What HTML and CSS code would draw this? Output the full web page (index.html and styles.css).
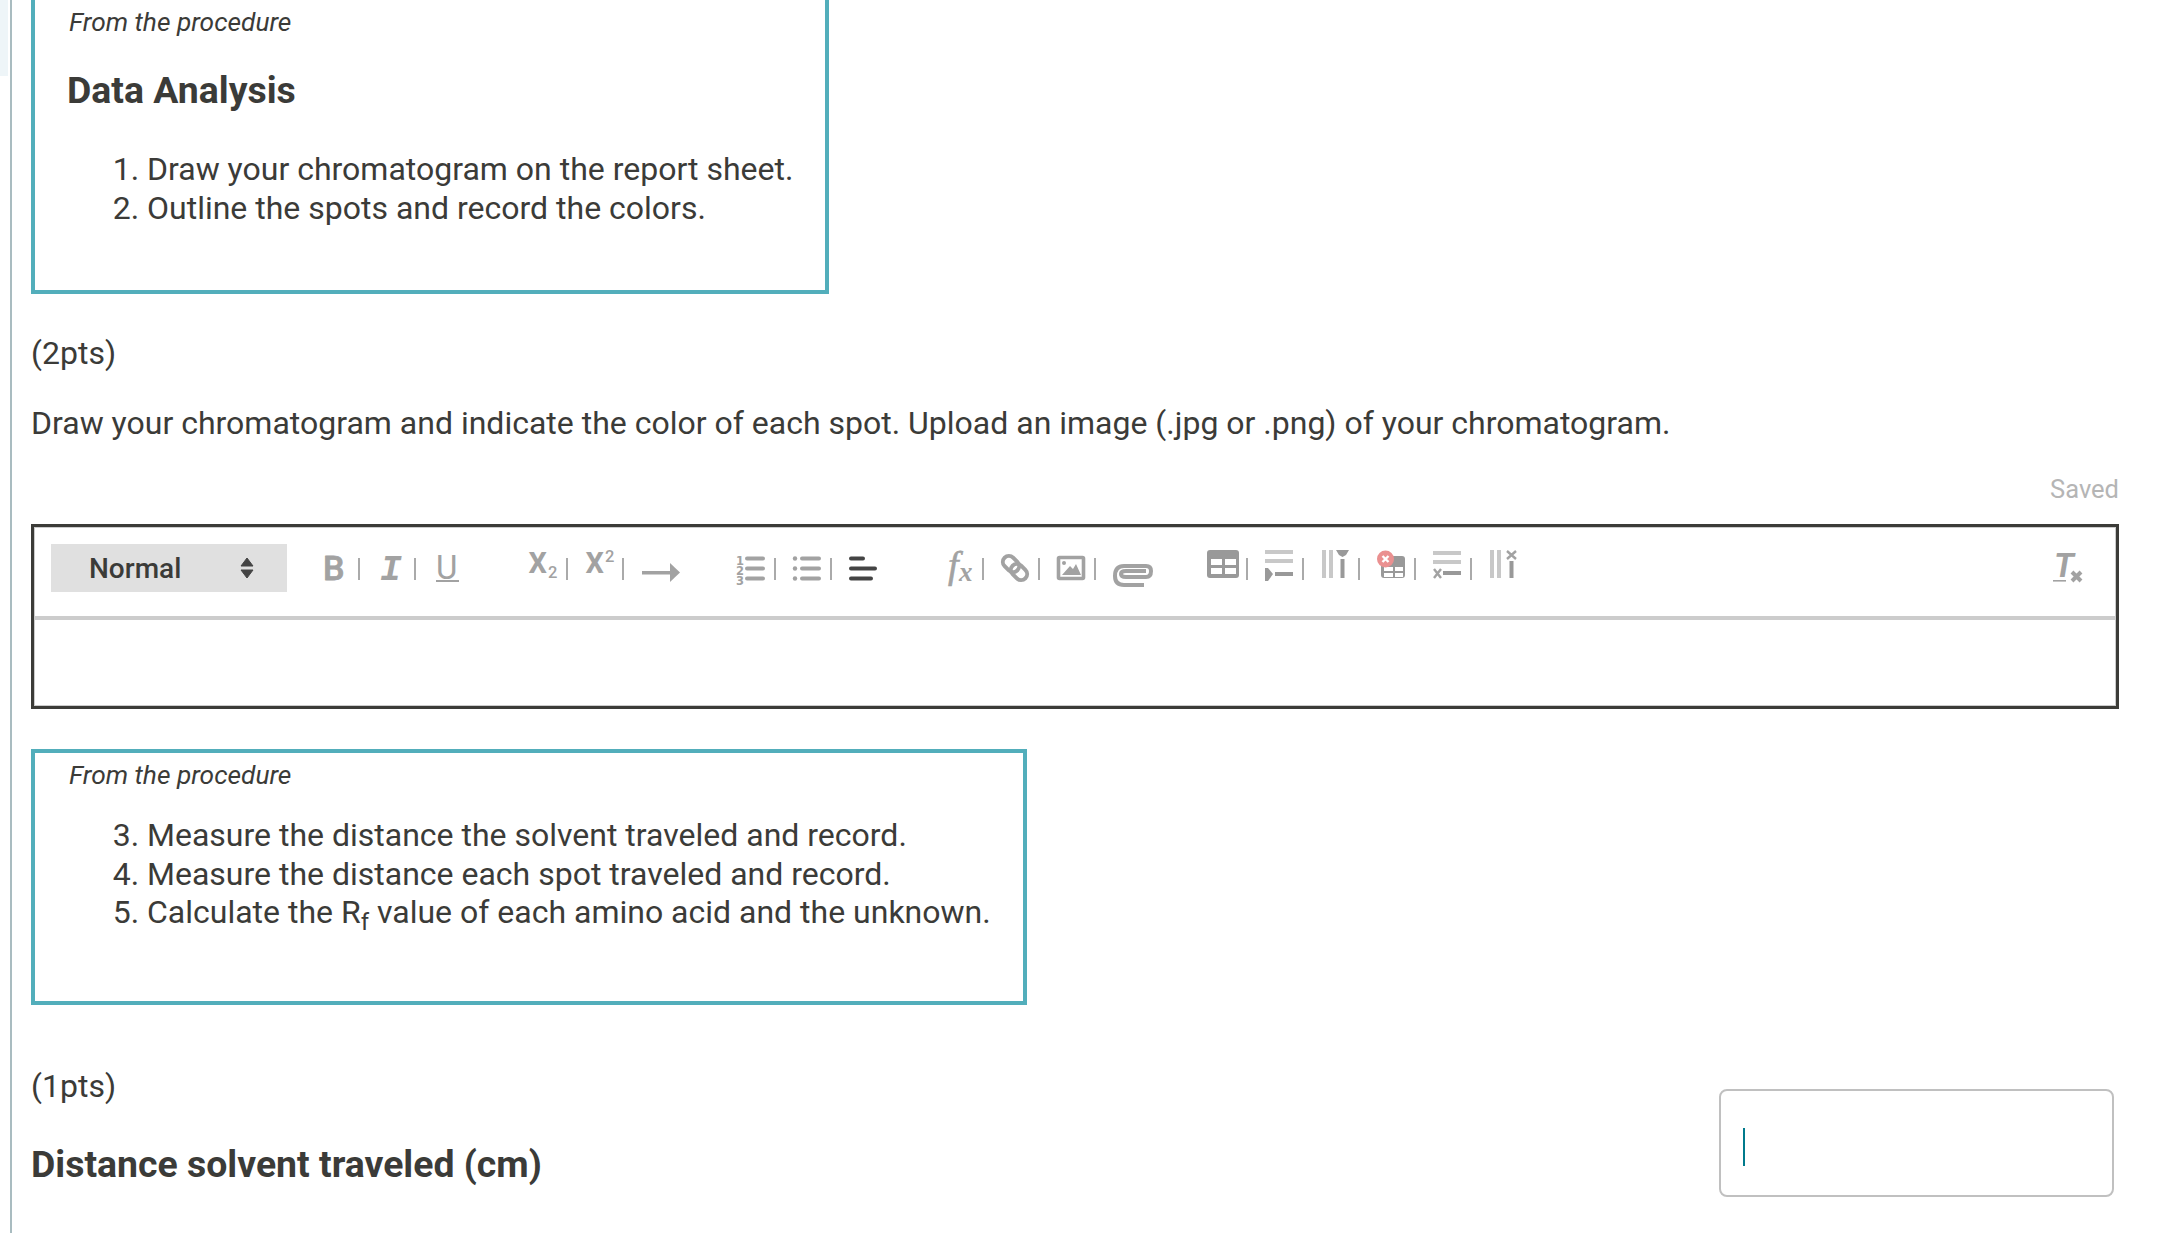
FILE: index.html
```html
<!DOCTYPE html>
<html lang="en">
<head>
<meta charset="UTF-8">
<title>Data Analysis</title>
<link rel="stylesheet" href="styles.css">
</head>
<body>
<div class="gutter"><div class="gutter-tab"></div></div>
<div class="page">

  <div class="procedure procedure-first">
    <p class="procedure-note">From the procedure</p>
    <h3>Data Analysis</h3>
    <ol>
      <li>Draw your chromatogram on the report sheet.</li>
      <li>Outline the spots and record the colors.</li>
    </ol>
  </div>

  <p class="points">(2pts)</p>
  <p class="question">Draw your chromatogram and indicate the color of each spot. Upload an image (.jpg or .png) of your chromatogram.</p>
  <div class="saved">Saved</div>

  <div class="editor">
    <div class="toolbar">
      <div class="format-select"><span>Normal</span>
        <svg width="14" height="22" viewBox="0 0 14 22"><path d="M7 1 L13 9 H1 Z M7 21 L13 13 H1 Z" fill="#444" stroke="#444" stroke-linejoin="round"/></svg>
      </div>

      <div class="tool-group first-group">
        <div class="tool"><svg viewBox="0 0 54 48"><text x="19" y="36" class="ico-b">B</text></svg></div>
        <div class="tool"><svg viewBox="0 0 54 48"><text x="20" y="36" class="ico-i">I</text></svg></div>
        <div class="tool last"><svg viewBox="0 0 54 48"><text x="20" y="35" class="ico-u">U</text><rect x="20" y="36" width="23" height="2" class="fill-gray"/></svg></div>
      </div>

      <div class="tool-group">
        <div class="tool"><svg viewBox="0 0 54 48"><text x="16.500" y="29" class="ico-x">X</text><text x="36" y="34" class="ico-idx">2</text></svg></div>
        <div class="tool"><svg viewBox="0 0 54 48"><text x="17.500" y="29" class="ico-x">X</text><text x="37" y="18" class="ico-idx">2</text></svg></div>
        <div class="tool last"><svg viewBox="0 0 54 48"><rect x="18" y="27" width="30" height="3.500" class="fill-gray"/><path d="M46 19 L56 28.500 L46 38 Z" class="fill-gray"/></svg></div>
      </div>

      <div class="tool-group">
        <div class="tool"><svg viewBox="0 0 54 48">
          <text x="16" y="21" class="ico-num">1</text><text x="16" y="31" class="ico-num">2</text><text x="16" y="41" class="ico-num">3</text>
          <rect x="25" y="12.500" width="20" height="4" rx="2" class="fill-gray"/><rect x="25" y="22.500" width="20" height="4" rx="2" class="fill-gray"/><rect x="25" y="32.500" width="20" height="4" rx="2" class="fill-gray"/>
        </svg></div>
        <div class="tool"><svg viewBox="0 0 54 48">
          <circle cx="19" cy="14.500" r="2.200" class="fill-gray"/><circle cx="19" cy="24.500" r="2.200" class="fill-gray"/><circle cx="19" cy="34.500" r="2.200" class="fill-gray"/>
          <rect x="24" y="12.500" width="21" height="4" rx="2" class="fill-gray"/><rect x="24" y="22.500" width="21" height="4" rx="2" class="fill-gray"/><rect x="24" y="32.500" width="21" height="4" rx="2" class="fill-gray"/>
        </svg></div>
        <div class="tool last"><svg viewBox="0 0 54 48">
          <rect x="17" y="12.500" width="16" height="4" rx="2" class="fill-dark"/><rect x="17" y="22.500" width="28" height="4" rx="2" class="fill-dark"/><rect x="17" y="32.500" width="24" height="4" rx="2" class="fill-dark"/>
        </svg></div>
      </div>

      <div class="tool-group">
        <div class="tool"><svg viewBox="0 0 54 48"><text x="20" y="34" class="ico-fx">f</text><text x="31" y="37" class="ico-fx2">x</text></svg></div>
        <div class="tool"><svg viewBox="0 0 54 48">
          <g fill="none" stroke="#a2a2a2" stroke-width="4">
            <rect x="18" y="14" width="18" height="12" rx="6" transform="rotate(45 27 20)"/>
            <rect x="26" y="22" width="18" height="12" rx="6" transform="rotate(45 35 28)"/>
          </g>
        </svg></div>
        <div class="tool"><svg viewBox="0 0 54 48">
          <rect x="18.500" y="13.500" width="25" height="21" rx="1" fill="none" stroke="#a2a2a2" stroke-width="3.600"/>
          <path d="M22 31 L30 22 L33 25 L36 20 L41 31 Z" class="fill-gray"/><circle cx="24" cy="19" r="2" class="fill-gray"/>
        </svg></div>
        <div class="tool last"><svg viewBox="0 0 54 48">
          <path d="M50 27 H30 Q25 27 25 30 Q25 33 30 33 H50 Q55 33 55 27 Q55 22 50 22 H28 Q19 22 19 32 Q19 41 28 41 H48" fill="none" stroke="#a2a2a2" stroke-width="4"/>
        </svg></div>
      </div>

      <div class="tool-group">
        <div class="tool"><svg viewBox="0 0 54 48">
          <rect x="15" y="6" width="32" height="28" rx="3" class="fill-table"/>
          <rect x="19" y="15" width="11" height="6" fill="#fff"/><rect x="33" y="15" width="11" height="6" fill="#fff"/><rect x="19" y="24" width="11" height="6" fill="#fff"/><rect x="33" y="24" width="11" height="6" fill="#fff"/>
        </svg></div>
        <div class="tool"><svg viewBox="0 0 54 48">
          <rect x="17" y="6" width="28" height="4" class="fill-light"/><rect x="17" y="15" width="28" height="4" class="fill-light"/>
          <path d="M17 24 H20 L25 30 L20 37 H17 Z" class="fill-table"/><rect x="27" y="28" width="18" height="4" class="fill-table"/>
        </svg></div>
        <div class="tool"><svg viewBox="0 0 54 48">
          <rect x="18" y="6" width="4" height="28" class="fill-light"/><rect x="25" y="6" width="4" height="28" class="fill-light"/>
          <path d="M32 6 H45 L42 11 L38.500 13 L35 11 Z" class="fill-table"/><rect x="36.500" y="15" width="4" height="19" class="fill-table"/>
        </svg></div>
        <div class="tool"><svg viewBox="0 0 54 48">
          <rect x="21" y="12" width="24" height="22" rx="3" class="fill-table"/>
          <rect x="24" y="23" width="9" height="4" fill="#fff"/><rect x="35" y="23" width="8" height="4" fill="#fff"/><rect x="24" y="29" width="9" height="4" fill="#fff"/><rect x="35" y="29" width="8" height="4" fill="#fff"/>
          <circle cx="25.500" cy="15" r="8.500" fill="#ea9090"/>
          <path d="M22.500 12 L28.500 18 M28.500 12 L22.500 18" stroke="#fff" stroke-width="2.400"/>
        </svg></div>
        <div class="tool"><svg viewBox="0 0 54 48">
          <rect x="17" y="7" width="28" height="4" class="fill-light"/><rect x="17" y="16" width="28" height="4" class="fill-light"/>
          <path d="M18 25 L25 34 M25 25 L18 34" stroke="#a2a2a2" stroke-width="2.400"/><rect x="27" y="27" width="18" height="4" class="fill-table"/>
        </svg></div>
        <div class="tool last"><svg viewBox="0 0 54 48">
          <rect x="18" y="6" width="4" height="28" class="fill-light"/><rect x="25" y="6" width="4" height="28" class="fill-light"/>
          <path d="M35 7 L44 15 M44 7 L35 15" stroke="#a2a2a2" stroke-width="2.400"/><rect x="37.500" y="17" width="4" height="17" class="fill-table"/>
        </svg></div>
      </div>

      <div class="clear-format"><svg width="32" height="48" viewBox="0 0 32 48"><text x="2" y="33" class="ico-t">T</text><path d="M20 28 L29 37 M29 28 L20 37" stroke="#a2a2a2" stroke-width="4"/><rect x="1" y="36" width="13" height="1.600" class="fill-gray"/></svg></div>
    </div>
    <div class="editor-body"></div>
  </div>

  <div class="procedure procedure-second">
    <p class="procedure-note">From the procedure</p>
    <ol start="3">
      <li>Measure the distance the solvent traveled and record.</li>
      <li>Measure the distance each spot traveled and record.</li>
      <li>Calculate the R<sub>f</sub> value of each amino acid and the unknown.</li>
    </ol>
  </div>

  <div class="answer-row">
    <div class="answer-label">
      <p class="points">(1pts)</p>
      <h3>Distance solvent traveled (cm)</h3>
    </div>
    <div class="answer-input"><span class="caret"></span></div>
  </div>

</div>
</body>
</html>
```

FILE: styles.css
```css
html, body {
  margin: 0;
  padding: 0;
  height: 100%;
  overflow: hidden;
}
body {
  display: flex;
  background-color: #fff;
  color: #3b3b38;
  font-family: Roboto, sans-serif;
  font-size: 32px;
}
.gutter {
  width: 10px;
  flex: none;
}
.gutter-tab {
  width: 8px;
  height: 76px;
  background-color: #eef5f8;
}
.page {
  flex: 1;
  border-left: 2px solid #a9bcc0;
  padding: 0 39px 0 19px;
}
p, h3 {
  margin: 0;
}

/* procedure boxes */
.procedure {
  border: 4px solid #52aebb;
  padding-left: 34px;
}
.procedure-first {
  width: 798px;
  height: 294px;
  box-sizing: border-box;
  border-top: 0;
}
.procedure-second {
  width: 996px;
  height: 256px;
  box-sizing: border-box;
  margin-top: 40px;
}
.procedure-note {
  font-style: italic;
  font-size: 26.300px;
  line-height: 32px;
}
.procedure-first .procedure-note {
  padding-top: 6px;
}
.procedure-second .procedure-note {
  padding-top: 6px;
}
h3 {
  font-size: 37.400px;
  font-weight: 700;
  line-height: 44px;
}
.procedure-first h3 {
  margin-top: 30px;
  margin-left: -2px;
}
.procedure ol {
  margin: 0;
  padding-left: 78px;
  line-height: 38.500px;
}
.procedure-first ol {
  margin-top: 38px;
}
.procedure-second ol {
  margin-top: 25px;
}
sub {
  font-size: 24px;
  line-height: 0;
}

/* question text */
.points {
  line-height: 40px;
}
.procedure-first + .points {
  margin-top: 39px;
}
.question {
  margin-top: 30px;
  line-height: 40px;
}
.saved {
  margin-top: 31px;
  text-align: right;
  color: #b5b5b5;
  font-size: 25.500px;
  line-height: 30px;
}

/* editor */
.editor {
  margin-top: 20px;
  border: 3px solid #3c3c38;
  box-shadow: inset 0 0 0 1px #ccc;
}
.toolbar {
  display: flex;
  align-items: flex-start;
  padding: 17px 32px 24px 17px;
  border-bottom: 4px solid #ccc;
}
.editor-body {
  height: 86px;
}
.format-select {
  width: 236px;
  height: 48px;
  flex: none;
  display: flex;
  align-items: center;
  justify-content: space-between;
  box-sizing: border-box;
  padding: 0 33px 0 38px;
  background-color: #e0e0e0;
  font-size: 28px;
  font-weight: 500;
}
.tool-group {
  display: flex;
  margin-left: 40px;
}
.first-group {
  margin-left: 17px;
}
.tool {
  width: 56px;
  height: 48px;
  display: flex;
}
.tool svg {
  width: 54px;
  height: 48px;
  flex: none;
  overflow: visible;
}
.tool::after {
  content: "";
  width: 2px;
  height: 22px;
  margin-top: 14px;
  background-color: #aaa;
  flex: none;
}
.tool.last::after {
  background-color: transparent;
}
.clear-format {
  margin-left: auto;
  height: 48px;
}
.fill-gray { fill: #a2a2a2; }
.fill-dark { fill: #444; }
.fill-table { fill: #999; }
.fill-light { fill: #c8c8c8; }
.ico-b {
  font: 500 34px Roboto, sans-serif;
  fill: #a2a2a2;
  stroke: #a2a2a2;
  stroke-width: 0.8px;
  stroke-linejoin: round;
}
.ico-u {
  font: 400 33px Roboto, sans-serif;
  fill: #a2a2a2;
}
.ico-i {
  font: italic 700 36px "Liberation Mono", monospace;
  fill: #a2a2a2;
}
.ico-x {
  font: 700 29px Roboto, sans-serif;
  fill: #a2a2a2;
}
.ico-idx {
  font: 500 16.500px Roboto, sans-serif;
  fill: #a2a2a2;
}
.ico-num {
  font: 700 11.500px "DejaVu Sans", sans-serif;
  fill: #a2a2a2;
}
.ico-fx {
  font: italic 38px "Liberation Serif", serif;
  fill: #a2a2a2;
  stroke: #a2a2a2;
  stroke-width: 0.6px;
}
.ico-fx2 {
  font: italic 700 27px "Liberation Serif", serif;
  fill: #a2a2a2;
}
.ico-t {
  font: italic 700 33px Roboto, sans-serif;
  fill: #a2a2a2;
}

/* answer */
.answer-row {
  display: flex;
  justify-content: space-between;
  margin-top: 61px;
  padding-right: 5px;
}
.answer-label h3 {
  margin-top: 36px;
}
.answer-input {
  width: 395px;
  height: 108px;
  margin-top: 23px;
  box-sizing: border-box;
  border: 2px solid #c0c0c0;
  border-radius: 8px;
  display: flex;
  align-items: center;
  padding: 7px 0 0 22px;
}
.caret {
  width: 2px;
  height: 38px;
  background-color: #007a8c;
}
```
